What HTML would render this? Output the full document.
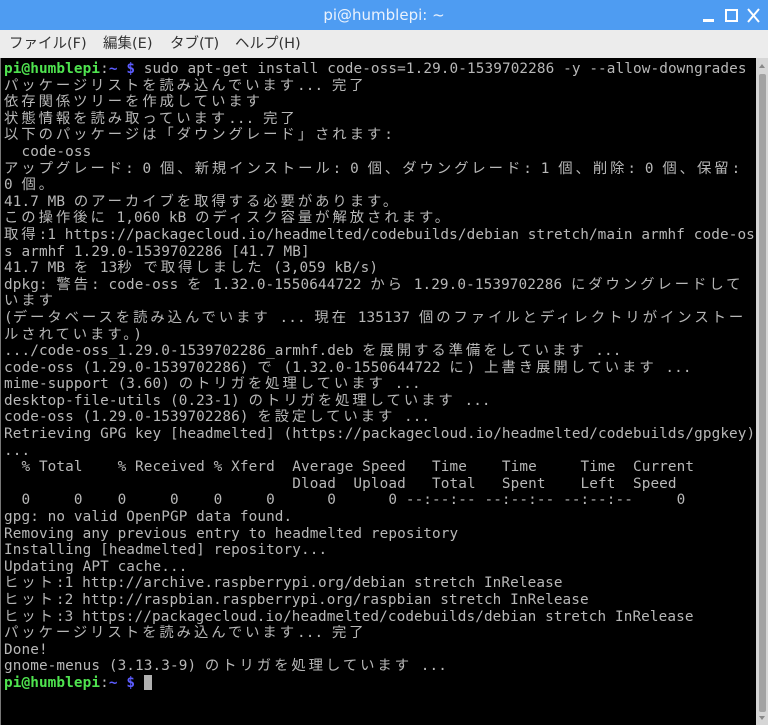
<!DOCTYPE html>
<html><head><meta charset="utf-8"><style>
body{margin:0;width:768px;height:725px;overflow:hidden;background:#000;position:relative;font-family:"Liberation Sans","Noto Sans CJK JP",sans-serif}
.title{position:absolute;left:0;top:0;width:768px;height:30px;background:#4e9cf2;color:#eaf2fd;font-size:15px;text-align:center;line-height:31px;font-family:"DejaVu Sans","Noto Sans CJK JP",sans-serif}
.menu{position:absolute;left:0;top:30px;width:768px;height:28px;background:#ececec;color:#333;font-size:14.5px;line-height:29px;font-family:"DejaVu Sans","Noto Sans CJK JP",sans-serif}
.menu span{position:absolute;top:0}
.term{position:absolute;left:0;top:58px;width:756px;height:667px;background:#000;border-left:1px solid #777}
pre{margin:0;padding:3px 0 0 3px;font-family:"DejaVu Sans Mono","Liberation Mono","Noto Sans CJK JP",monospace;font-size:14.35px;letter-spacing:0.1px;line-height:16.6px;color:#b8b8b8;white-space:pre}
i{font-style:normal;letter-spacing:2.95px}
.g{color:#4fe34f;font-weight:bold}.b{color:#5c5cff;font-weight:bold}
.cur{display:inline-block;width:8px;height:15px;background:#b0b0b0;vertical-align:-3px}
.sb{position:absolute;left:756px;top:58px;width:12px;height:667px;background:#d6d6d6}
.th{position:absolute;left:759px;top:74px;width:7px;height:638px;background:#a3a3a3;border-radius:2px}
</style></head><body>
<div class="title">pi@humblepi: ~</div>
<svg style="position:absolute;left:700px;top:8px" width="64" height="16"><rect x="3" y="11" width="11" height="3" fill="#fff"/><rect x="26" y="2" width="11" height="11" fill="none" stroke="#fff" stroke-width="2"/><path d="M48 1L59 14M59 1L48 14" stroke="#fff" stroke-width="2"/></svg>
<div class="menu"><span style="left:9px">ファイル(F)</span><span style="left:103px">編集(E)</span><span style="left:170px">タブ(T)</span><span style="left:235px">ヘルプ(H)</span></div>
<div class="term"><pre><span class="g">pi@humblepi</span>:<span class="b">~ $</span> sudo apt-get install code-oss=1.29.0-1539702286 -y --allow-downgrades
<i>パッケージリストを読み込んでいます</i>... <i>完了</i>
<i>依存関係ツリーを作成しています</i>
<i>状態情報を読み取っています</i>... <i>完了</i>
<i>以下のパッケージは「ダウングレード」されます</i>:
  code-oss
<i>アップグレード</i>: 0 <i>個、新規インストール</i>: 0 <i>個、ダウングレード</i>: 1 <i>個、削除</i>: 0 <i>個、保留</i>:
0 <i>個。</i>
41.7 MB <i>のアーカイブを取得する必要があります。</i>
<i>この操作後に</i> 1,060 kB <i>のディスク容量が解放されます。</i>
<i>取得</i>:1 https://packagecloud.io/headmelted/codebuilds/debian stretch/main armhf code-os
s armhf 1.29.0-1539702286 [41.7 MB]
41.7 MB <i>を</i> 13<i>秒</i> <i>で取得しました</i> (3,059 kB/s)
dpkg: <i>警告</i>: code-oss <i>を</i> 1.32.0-1550644722 <i>から</i> 1.29.0-1539702286 <i>にダウングレードして</i>
<i>います</i>
(<i>データベースを読み込んでいます</i> ... <i>現在</i> 135137 <i>個のファイルとディレクトリがインストー</i>
<i>ルされています。</i>)
.../code-oss_1.29.0-1539702286_armhf.deb <i>を展開する準備をしています</i> ...
code-oss (1.29.0-1539702286) <i>で</i> (1.32.0-1550644722 <i>に</i>) <i>上書き展開しています</i> ...
mime-support (3.60) <i>のトリガを処理しています</i> ...
desktop-file-utils (0.23-1) <i>のトリガを処理しています</i> ...
code-oss (1.29.0-1539702286) <i>を設定しています</i> ...
Retrieving GPG key [headmelted] (https://packagecloud.io/headmelted/codebuilds/gpgkey)
...
  % Total    % Received % Xferd  Average Speed   Time    Time     Time  Current
                                 Dload  Upload   Total   Spent    Left  Speed
  0     0    0     0    0     0      0      0 --:--:-- --:--:-- --:--:--     0
gpg: no valid OpenPGP data found.
Removing any previous entry to headmelted repository
Installing [headmelted] repository...
Updating APT cache...
<i>ヒット</i>:1 http://archive.raspberrypi.org/debian stretch InRelease
<i>ヒット</i>:2 http://raspbian.raspberrypi.org/raspbian stretch InRelease
<i>ヒット</i>:3 https://packagecloud.io/headmelted/codebuilds/debian stretch InRelease
<i>パッケージリストを読み込んでいます</i>... <i>完了</i>
Done!
gnome-menus (3.13.3-9) <i>のトリガを処理しています</i> ...
<span class="g">pi@humblepi</span>:<span class="b">~ $</span> <span class="cur"></span></pre></div>
<div class="sb"></div><div class="th"></div>
<svg style="position:absolute;left:757px;top:61px" width="10" height="10"><path d="M2 7L5 3L8 7Z" fill="#888"/></svg>
<svg style="position:absolute;left:757px;top:713px" width="10" height="10"><path d="M2 3L5 7L8 3Z" fill="#888"/></svg>
</body></html>
